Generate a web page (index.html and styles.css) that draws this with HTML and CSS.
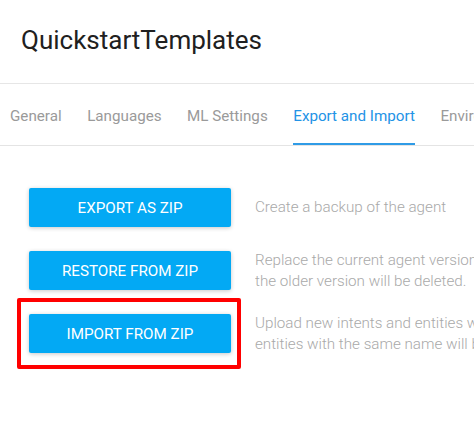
FILE: index.html
```html
<!DOCTYPE html>
<html lang="en">
<head>
<meta charset="utf-8">
<title>QuickstartTemplates</title>
<link rel="stylesheet" href="styles.css">
</head>
<body>
<header class="header">
  <h1 class="title">QuickstartTemplates</h1>
</header>
<nav class="tabs">
  <span class="tab">General</span>
  <span class="tab">Languages</span>
  <span class="tab">ML Settings</span>
  <span class="tab active">Export and Import</span>
  <span class="tab">Environments</span>
</nav>
<main class="content">
  <div class="row">
    <div class="btn-wrap"><button class="btn">EXPORT AS ZIP</button></div>
    <p class="desc">Create a backup of the agent</p>
  </div>
  <div class="row">
    <div class="btn-wrap"><button class="btn">RESTORE FROM ZIP</button></div>
    <p class="desc">Replace the current agent version with a new one. All the intents and entities in<br>the older version will be deleted.</p>
  </div>
  <div class="row">
    <div class="btn-wrap"><button class="btn">IMPORT FROM ZIP</button><span class="highlight"></span></div>
    <p class="desc">Upload new intents and entities without deleting the current ones. Intents and<br>entities with the same name will be replaced with the newer version.</p>
  </div>
</main>
</body>
</html>
```
FILE: styles.css
```css
html {
  overflow: hidden;
}

body {
  margin: 0;
  padding: 0;
  background: #ffffff;
  font-family: Roboto, "Liberation Sans", Arial, sans-serif;
}

.header {
  height: 79px;
  padding: 0 0 4px 21px;
  display: flex;
  align-items: center;
  border-bottom: 1px solid #e6e6e6;
}

.title {
  margin: 0;
  font-size: 26px;
  font-weight: 400;
  color: #202020;
  letter-spacing: 0;
}

.tabs {
  display: flex;
  gap: 25.5px;
  height: 61px;
  padding-left: 10px;
  border-bottom: 1px solid #e4e4e4;
  white-space: nowrap;
  overflow: hidden;
}

.tab {
  display: flex;
  align-items: center;
  padding-top: 5px;
  box-sizing: border-box;
  border-bottom: 2px solid transparent;
  font-size: 15.2px;
  color: #9a9a9a;
  flex-shrink: 0;
}

.tab.active {
  color: #2393e6;
  border-bottom-color: #2f9be6;
}

.content {
  padding: 30px 0 40px;
}

.row {
  display: flex;
  align-items: center;
  height: 63px;
}

.btn-wrap {
  position: relative;
  margin-left: 29px;
  flex-shrink: 0;
}

.btn {
  display: block;
  width: 202px;
  height: 39px;
  border: none;
  border-radius: 2px;
  background: #03a9f4;
  color: #ffffff;
  font-family: Roboto, "Liberation Sans", Arial, sans-serif;
  font-size: 15.2px;
  font-weight: 400;
  box-shadow: 0 1px 4px rgba(0, 0, 0, 0.22);
  padding: 0;
}

.highlight {
  position: absolute;
  top: -16px;
  bottom: -16px;
  left: -12px;
  right: -10px;
  border: 4px solid #f00;
  border-radius: 2px;
  box-sizing: border-box;
}

.desc {
  margin: 0 0 0 24px;
  min-width: 0;
  overflow: hidden;
  white-space: nowrap;
  font-size: 15.2px;
  font-weight: 300;
  line-height: 21px;
  color: #a9a9a9;
}
```
